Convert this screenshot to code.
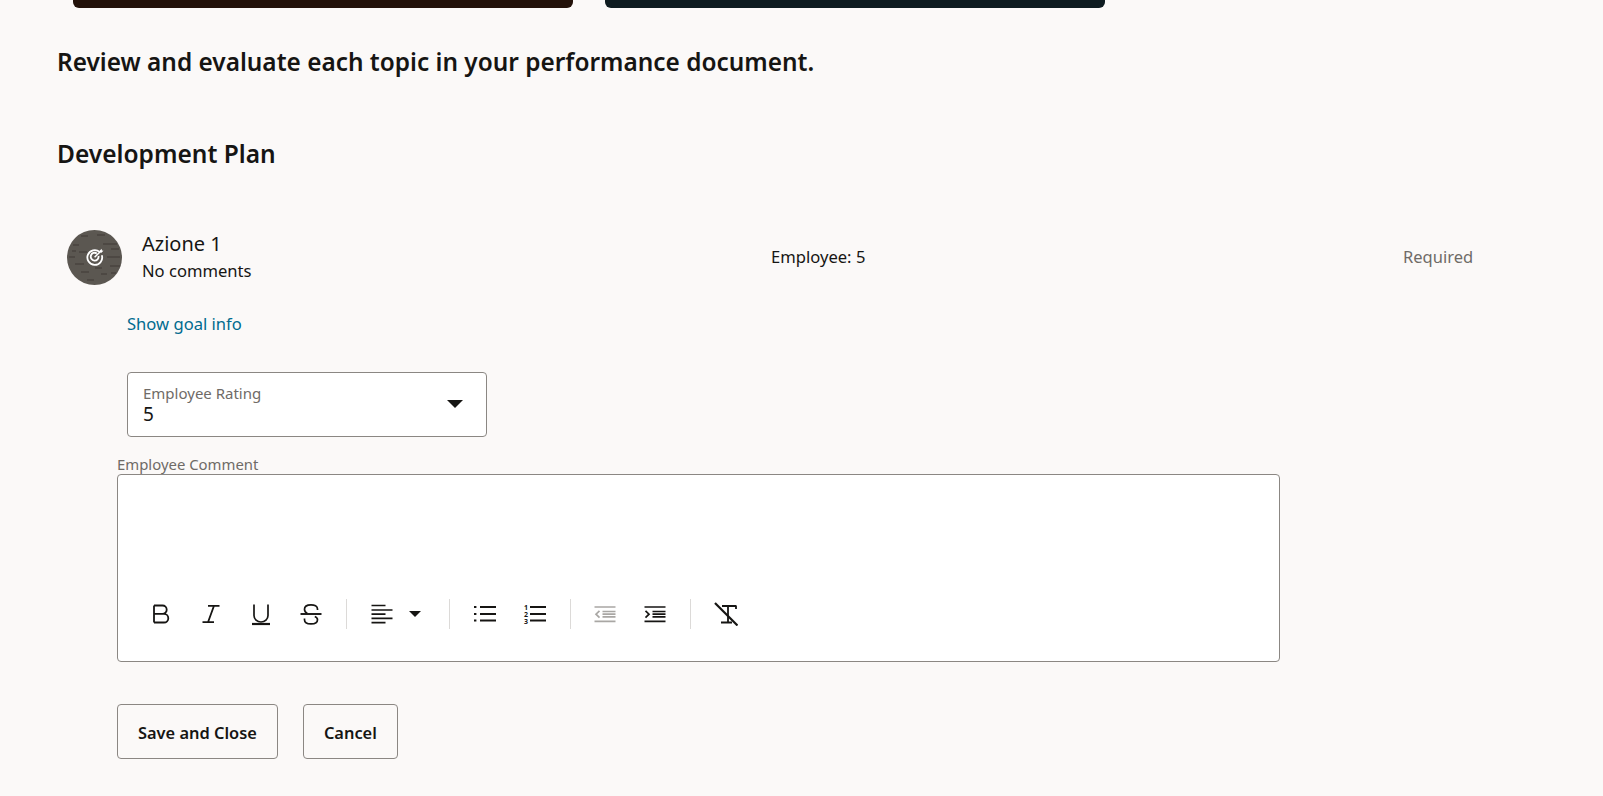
<div class="page">
  <div class="cards">
    <div class="card brown"></div>
    <div class="card navy"></div>
  </div>

  <h1 class="intro">Review and evaluate each topic in your performance document.</h1>
  <h2 class="section">Development Plan</h2>

  <div class="row">
    <div class="avatar">
      <svg class="texture" viewBox="0 0 55 55" width="55" height="55" aria-hidden="true">
        <g stroke="#38332e" stroke-width="1" opacity=".8">
          <path d="M14 6h7M30 5h8M6 15h6M36 14h14M12 22h8M44 19h8M2 27h6M40 27h13M8 34h9M28 38h7M43 36h11M14 42h8M34 44h6M20 50h7M5 21h4M44 43h5"/>
        </g>
      </svg>
      <svg class="target" viewBox="0 0 18 18" width="18" height="18" aria-hidden="true">
        <g fill="none" stroke="#fff" stroke-width="1.8">
          <path d="M13.6 3.900A7.400 7.400 0 1 0 15.800 7.200"/>
          <path d="M10.800 5.400A3.900 3.900 0 1 0 12.500 8"/>
          <path d="M8.600 9.200 15 3" stroke-width="1.500"/>
        </g>
        <path d="M13.200 3.200 15.600.8l.3 1.600 1.600.3-2.400 2.400z" fill="#fff"/>
      </svg>
    </div>
    <div class="titles">
      <div class="name">Azione 1</div>
      <div class="sub">No comments</div>
    </div>
    <div class="score">Employee: 5</div>
    <div class="req">Required</div>
  </div>

  <div class="body">
    <div class="inset">
      <a class="link" href="#goal">Show goal info</a>
      <div class="select">
        <div class="select-text">
          <div class="select-label">Employee Rating</div>
          <div class="select-value">5</div>
        </div>
        <span class="caret"></span>
      </div>
    </div>

    <div class="comment-label">Employee Comment</div>
    <div class="editor">
      <div class="toolbar">
        <div class="group">
          <button class="tool" aria-label="Bold">
            <svg viewBox="0 0 24 24"><path d="M5 3.500v17M5 3.500h8.500a4.200 4.200 0 0 1 0 8.400H5M13.500 11.900h1.500a4.300 4.300 0 0 1 0 8.600H5" fill="none" stroke="#161513" stroke-width="1.800"/></svg>
          </button>
          <button class="tool" aria-label="Italic">
            <svg viewBox="0 0 24 24"><path d="M9 3.800h11.500M3.500 20.200H15M15 3.800 9 20.200" fill="none" stroke="#161513" stroke-width="1.800"/></svg>
          </button>
          <button class="tool" aria-label="Underline">
            <svg viewBox="0 0 24 24"><path d="M5 2.500v11a7 6.500 0 0 0 14 0v-11" fill="none" stroke="#161513" stroke-width="1.700"/><path d="M3 22h18" stroke="#161513" stroke-width="2.200"/></svg>
          </button>
          <button class="tool" aria-label="Strikethrough">
            <svg viewBox="0 0 24 24"><path d="M18.500 8V7C18.500 4 15.500 2.800 12 2.800S5.500 4.200 5.500 7.300c0 2 1.100 3.300 2.800 4M15.800 14.500c1.700.7 2.700 1.700 2.700 3.200 0 2.900-3 4.200-6.500 4.200s-6.500-1.300-6.500-4.200V16.500" fill="none" stroke="#161513" stroke-width="1.700"/><path d="M1.500 12h21" stroke="#161513" stroke-width="1.900"/></svg>
          </button>
        </div>
        <span class="sep"></span>
        <div class="group align">
          <svg class="ico" viewBox="0 0 24 24"><path d="M1.500 3.500h14M1.500 8h21M1.500 12.200h14M1.500 16.300h21M1.500 20.700h14" stroke="#161513" stroke-width="1.700"/></svg>
          <span class="mini-caret"></span>
        </div>
        <span class="sep"></span>
        <div class="group">
          <button class="tool" aria-label="Bullets">
            <svg viewBox="0 0 24 24"><path d="M1 5h2.400M1 12h2.400M1 18.500h2.400" stroke="#161513" stroke-width="2.200"/><path d="M7 5h16M7 12h16M7 18.500h16" stroke="#161513" stroke-width="1.800"/></svg>
          </button>
          <button class="tool" aria-label="Numbers">
            <svg viewBox="0 0 24 24"><text x="1" y="7.500" class="num">1</text><text x="1" y="14.500" class="num">2</text><text x="1" y="21.500" class="num">3</text><path d="M7 5h16M7 12h16M7 18.500h16" stroke="#161513" stroke-width="1.800"/></svg>
          </button>
        </div>
        <span class="sep"></span>
        <div class="group">
          <button class="tool" aria-label="Outdent">
            <svg viewBox="0 0 24 24"><path d="M1.500 5h21M1.500 19.300h21M9.500 9.500h13M9.500 12.200h13M9.500 14.900h13" stroke="#a9a7a4" stroke-width="1.700"/><path d="M6.500 8.800 3 12.200 6.500 15.600" fill="none" stroke="#a9a7a4" stroke-width="1.700"/></svg>
          </button>
          <button class="tool" aria-label="Indent">
            <svg viewBox="0 0 24 24"><path d="M1.500 5h21M1.500 19.300h21M9.500 9.500h13M9.500 12.200h13M9.500 14.900h13" stroke="#161513" stroke-width="1.700"/><path d="M2.500 8.800 6 12.200 2.500 15.600" fill="none" stroke="#161513" stroke-width="1.700"/></svg>
          </button>
        </div>
        <span class="sep"></span>
        <div class="group">
          <button class="tool" aria-label="Clear formatting">
            <svg viewBox="0 0 24 24"><path d="M8 4h14.500M7 20.500h11M14 4v16.500M22 4v3" fill="none" stroke="#161513" stroke-width="1.800"/><path d="M1 1 23.500 23.500" stroke="#161513" stroke-width="2.200"/></svg>
          </button>
        </div>
      </div>
    </div>

    <div class="actions">
      <button class="btn">Save and Close</button>
      <button class="btn">Cancel</button>
    </div>
  </div>
</div>

<style>
  :global(body) {
    margin: 0;
    background: #fbf9f8;
  }
  .page {
    height: 796px;
    overflow: hidden;
    box-sizing: border-box;
    padding-left: 57px;
    font-family: "Noto Sans", "Open Sans", sans-serif;
    color: #161513;
  }
  .cards {
    display: flex;
    gap: 32px;
    margin-left: 16px;
  }
  .card {
    width: 500px;
    height: 8px;
    border-radius: 0 0 6px 6px;
  }
  .brown { background: #23120a; }
  .navy { background: #0e1b20; }
  .intro {
    margin: 32px 0 0;
    font-size: 24.4px;
    line-height: 44px;
    font-weight: 600;
  }
  .section {
    margin: 48px 0 0;
    font-size: 24.5px;
    line-height: 44px;
    font-weight: 600;
  }
  .row {
    display: grid;
    grid-template-columns: 55px 649px 632px auto;
    align-items: center;
    margin: 54px 0 0 10px;
    height: 55px;
  }
  .avatar {
    position: relative;
    width: 55px;
    height: 55px;
    border-radius: 50%;
    background: #5c5852;
    overflow: hidden;
  }
  .texture { position: absolute; left: 0; top: 0; }
  .target { position: absolute; left: 19px; top: 18px; }
  .titles { padding-left: 20px; margin-top: -2px; }
  .name {
    font-size: 20px;
    line-height: 28px;
  }
  .sub {
    font-size: 16.6px;
    line-height: 24px;
    margin-top: 1px;
  }
  .score { font-size: 16.6px; margin-top: -2px; }
  .req { font-size: 16.5px; color: #6f6b67; margin-top: -2px; }
  .body { margin-left: 60px; }
  .inset { margin-left: 10px; }
  .link {
    display: block;
    margin-top: 27px;
    font-size: 16.6px;
    line-height: 24px;
    color: #006b8f;
    text-decoration: none;
  }
  .select {
    display: flex;
    align-items: center;
    justify-content: space-between;
    box-sizing: border-box;
    width: 360px;
    height: 65px;
    margin-top: 36px;
    padding: 0 23px 0 15px;
    background: #fff;
    border: 1px solid #8b8783;
    border-radius: 4px;
  }
  .select-text { padding-bottom: 1px; }
  .select-label {
    font-size: 15px;
    line-height: 18px;
    color: #6f6b67;
  }
  .select-value {
    font-size: 19px;
    line-height: 22px;
    margin-top: 1px;
  }
  .caret {
    width: 0;
    height: 0;
    margin-top: -2px;
    border-left: 8px solid transparent;
    border-right: 8px solid transparent;
    border-top: 8px solid #161513;
  }
  .comment-label {
    margin: 18px 0 1px;
    font-size: 14.9px;
    line-height: 18px;
    color: #6f6b67;
  }
  .editor {
    box-sizing: border-box;
    height: 188px;
    width: 1163px;
    background: #fff;
    border: 1px solid #8b8783;
    border-radius: 4px;
    display: flex;
    align-items: flex-end;
    padding: 0 0 25px 25px;
  }
  .toolbar {
    display: flex;
    align-items: center;
    height: 44px;
  }
  .group {
    display: flex;
    align-items: center;
    gap: 14px;
  }
  .tool {
    width: 36px;
    height: 36px;
    padding: 6px;
    margin: 0;
    border: 0;
    background: none;
    box-sizing: border-box;
  }
  .tool svg { display: block; width: 24px; height: 24px; }
  .sep {
    width: 1px;
    height: 30px;
    background: #dcdad8;
    margin: 0 16.5px 0 17px;
  }
  .align { gap: 15px; padding: 0 11px 0 6.5px; }
  .ico { width: 24px; height: 24px; display: block; }
  .mini-caret {
    width: 0;
    height: 0;
    border-left: 6px solid transparent;
    border-right: 6px solid transparent;
    border-top: 6px solid #161513;
  }
  .num {
    font-size: 7px;
    font-weight: 700;
    font-family: "Noto Sans", sans-serif;
    fill: #161513;
  }
  .actions {
    display: flex;
    gap: 25px;
    margin-top: 42px;
  }
  .btn {
    box-sizing: border-box;
    height: 55px;
    padding: 1px 20px 0;
    background: transparent;
    border: 1px solid #8b8783;
    border-radius: 4px;
    font-family: inherit;
    font-size: 16.4px;
    font-weight: 600;
    color: #161513;
  }
</style>
